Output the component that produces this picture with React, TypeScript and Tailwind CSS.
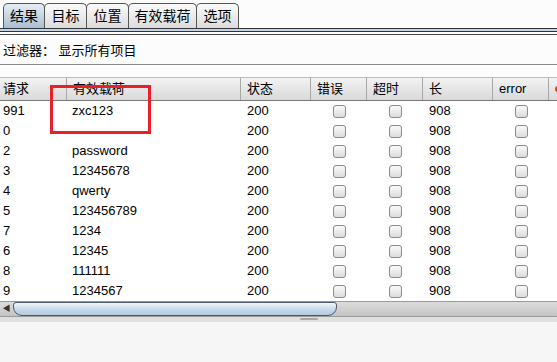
import React from "react";

const rows = [
  ["991", "zxc123"],
  ["0", ""],
  ["2", "password"],
  ["3", "12345678"],
  ["4", "qwerty"],
  ["5", "123456789"],
  ["7", "1234"],
  ["6", "12345"],
  ["8", "111111"],
  ["9", "1234567"],
];

const tabs = [
  { label: "结果", w: "w-[42px]", active: true },
  { label: "目标", w: "w-[43px]" },
  { label: "位置", w: "w-[43px]" },
  { label: "有效载荷", w: "w-[69px]" },
  { label: "选项", w: "w-[43px]" },
];

const cols = "grid grid-cols-[67px_174px_70px_56px_56px_70px_56px_1fr]";

function Box() {
  return (
    <div className="w-[13px] h-[13px] rounded-[3px] border border-[#8c8c8c] bg-gradient-to-b from-[#fafafa] to-[#dcdcdc]" />
  );
}

function Head({ children, last, first }: { children?: React.ReactNode; last?: boolean; first?: boolean }) {
  return (
    <div
      className={
        "h-full flex items-center " +
        (first ? "pl-[3px] " : "pl-[6px] ") +
        (last ? "" : "border-r border-[#a8a8a8]")
      }
    >
      {children}
    </div>
  );
}

export default function App() {
  return (
    <div
      className="w-[557px] h-[362px] bg-[#fcfcfc] text-[13px] text-black overflow-hidden flex flex-col"
      style={{ fontFamily: '"Liberation Sans", "Noto Sans CJK SC", sans-serif' }}
    >
      {/* tabs */}
      <div className="flex pl-[3px] pt-[3px] h-[28px]">
        {tabs.map((t) => (
          <div
            key={t.label}
            className={
              t.w +
              " h-[25px] -mr-px flex items-center justify-center rounded-t-[5px] border border-b-0 border-[#555] text-[14px] " +
              (t.active
                ? "bg-gradient-to-b from-[#e6eef6] to-[#a9bfd4]"
                : "bg-gradient-to-b from-[#fbfbfb] to-[#dcdcdc]")
            }
          >
            {t.label}
          </div>
        ))}
      </div>
      <div className="h-[4px] border-t border-b border-[#333] bg-[#c3d4e6]" />
      <div className="h-[3px] border-b border-[#444] bg-white" />

      {/* filter */}
      <div className="h-[30px] flex items-center pl-[3px] pt-[3px] border-b border-[#8a8a8a]">
        过滤器：&nbsp;显示所有项目
      </div>
      <div className="h-[12px]" />

      {/* table */}
      <div className="relative bg-white">
        <div
          className={
            cols +
            " h-[24px] border-t border-[#bdbdbd] border-b border-b-[#7a7a7a] bg-gradient-to-b from-[#f3f3f3] to-[#d9d9d9]"
          }
        >
          <Head first>请求</Head>
          <Head>有效载荷</Head>
          <Head>状态</Head>
          <Head>错误</Head>
          <Head>超时</Head>
          <Head>长</Head>
          <Head>error</Head>
          <Head last>
            <span className="w-[3px] h-[6px] rounded-l-full bg-[#c05000]" />
          </Head>
        </div>
        {rows.map(([id, p]) => (
          <div key={id} className={cols + " h-[20px] items-center"}>
            <div className="pl-[3px]">{id}</div>
            <div className="pl-[5px]">{p}</div>
            <div className="pl-[6px]">200</div>
            <div className="flex justify-center">
              <Box />
            </div>
            <div className="flex justify-center">
              <Box />
            </div>
            <div className="pl-[6px]">908</div>
            <div className="flex justify-center">
              <Box />
            </div>
            <div />
          </div>
        ))}
        <div className="absolute left-[50px] top-[8px] w-[101px] h-[49px] border-[3px] border-[#e8202a]" />
      </div>

      {/* scrollbar */}
      <div className="h-[15px] flex items-center border-t border-[#9a9a9a] bg-gradient-to-b from-[#dcdcdc] to-[#c4c4c4]">
        <div className="w-[13px] flex items-center justify-center text-[8px] text-[#333]">◀</div>
        <div className="w-[324px] h-[14px] rounded-b-[9px] rounded-t-[3px] border border-[#4a5a6a] bg-gradient-to-b from-[#f2f6fa] via-[#c9dbeb] to-[#b4c9dc]" />
      </div>
      <div className="h-[6px] border-t border-[#9a9a9a] bg-[#e0e0e0] flex justify-center">
        <div className="w-[18px] h-[2px] mt-[1px] ml-[60px] bg-[#a8a8a8] rounded-[1px]" />
      </div>
      <div className="flex-1 bg-[#f6f6f6]" />
    </div>
  );
}
